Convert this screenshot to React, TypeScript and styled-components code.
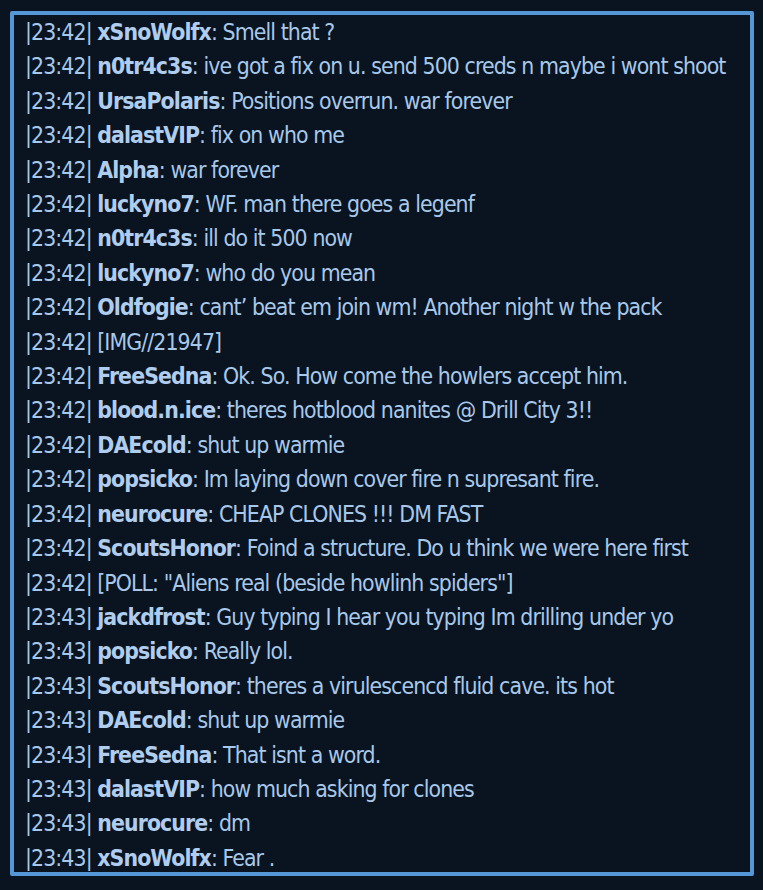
import React from 'react'
import styled, { createGlobalStyle } from 'styled-components'

type Msg = { time: string; user?: string; text: string }

const messages: Msg[] = [
  { time: '23:42', user: 'xSnoWolfx', text: 'Smell that ?' },
  { time: '23:42', user: 'n0tr4c3s', text: 'ive got a fix on u. send 500 creds n maybe i wont shoot' },
  { time: '23:42', user: 'UrsaPolaris', text: 'Positions overrun. war forever' },
  { time: '23:42', user: 'dalastVIP', text: 'fix on who me' },
  { time: '23:42', user: 'Alpha', text: 'war forever' },
  { time: '23:42', user: 'luckyno7', text: 'WF. man there goes a legenf' },
  { time: '23:42', user: 'n0tr4c3s', text: 'ill do it 500 now' },
  { time: '23:42', user: 'luckyno7', text: 'who do you mean' },
  { time: '23:42', user: 'Oldfogie', text: 'cant\u2019 beat em join wm! Another night w the pack' },
  { time: '23:42', text: '[IMG//21947]' },
  { time: '23:42', user: 'FreeSedna', text: 'Ok. So. How come the howlers accept him.' },
  { time: '23:42', user: 'blood.n.ice', text: 'theres hotblood nanites @ Drill City 3!!' },
  { time: '23:42', user: 'DAEcold', text: 'shut up warmie' },
  { time: '23:42', user: 'popsicko', text: 'Im laying down cover fire n supresant fire.' },
  { time: '23:42', user: 'neurocure', text: 'CHEAP CLONES !!! DM FAST' },
  { time: '23:42', user: 'ScoutsHonor', text: 'Foind a structure. Do u think we were here first' },
  { time: '23:42', text: '[POLL: "Aliens real (beside howlinh spiders"]' },
  { time: '23:43', user: 'jackdfrost', text: 'Guy typing I hear you typing Im drilling under yo' },
  { time: '23:43', user: 'popsicko', text: 'Really lol.' },
  { time: '23:43', user: 'ScoutsHonor', text: 'theres a virulescencd fluid cave. its hot' },
  { time: '23:43', user: 'DAEcold', text: 'shut up warmie' },
  { time: '23:43', user: 'FreeSedna', text: 'That isnt a word.' },
  { time: '23:43', user: 'dalastVIP', text: 'how much asking for clones' },
  { time: '23:43', user: 'neurocure', text: 'dm' },
  { time: '23:43', user: 'xSnoWolfx', text: 'Fear .' },
]

const GlobalStyle = createGlobalStyle`
  html, body {
    margin: 0;
    background: #0a1421;
  }
`

const Page = styled.div`
  padding: 11px 9px 14px 10px;
`

const ChatBox = styled.div`
  height: 865px;
  box-sizing: border-box;
  border: 4px solid #5596d6;
  border-radius: 2px;
  padding: 0 0 0 11px;
  overflow: hidden;
  font-family: "DejaVu Sans Condensed", "DejaVu Sans", sans-serif;
  font-stretch: condensed;
  font-size: 22.8px;
  letter-spacing: -0.9px;
  line-height: 34.4px;
  color: #a8c8ea;
`

const Line = styled.div`
  white-space: nowrap;
`

const Nick = styled.b`
  font-weight: 700;
  color: #b0cdee;
`

export default function App() {
  return (
    <Page>
      <GlobalStyle />
      <ChatBox>
        {messages.map((m, i) => (
          <Line key={i}>
            |{m.time}| {m.user ? <><Nick>{m.user}</Nick>: {m.text}</> : m.text}
          </Line>
        ))}
      </ChatBox>
    </Page>
  )
}
